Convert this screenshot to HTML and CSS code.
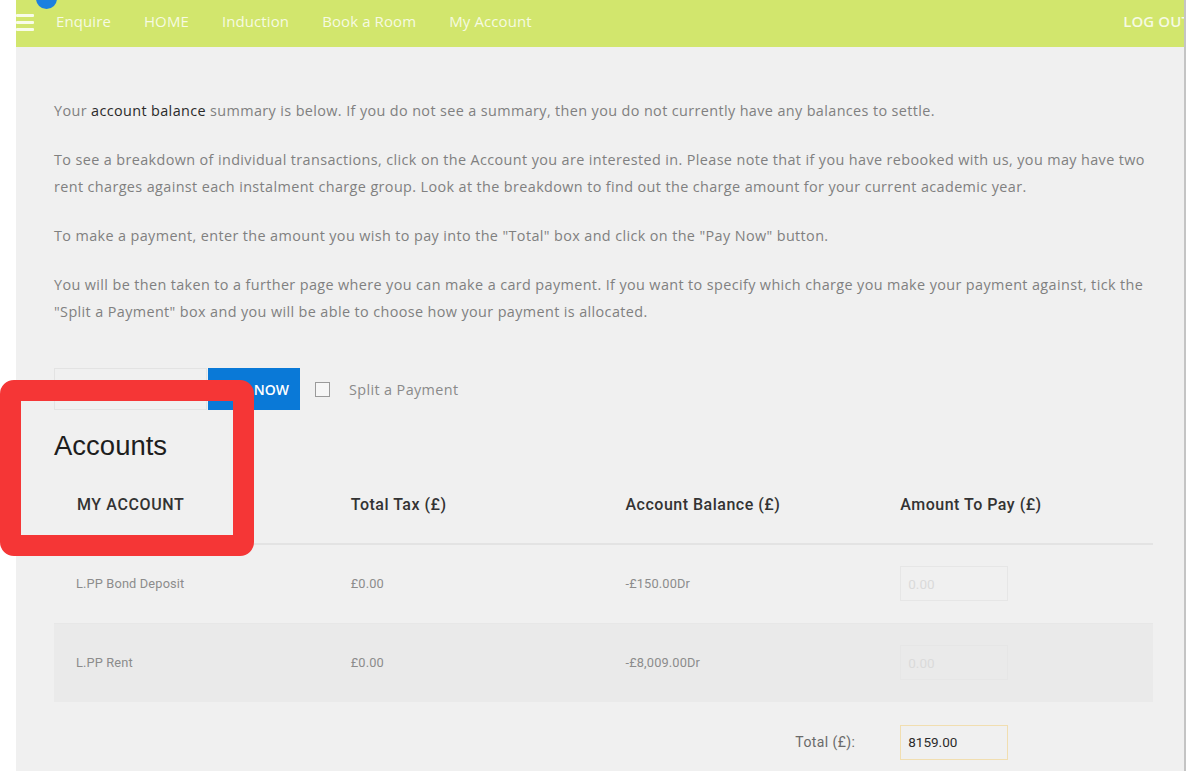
FILE: index.html
```html
<!DOCTYPE html>
<html lang="en">
<head>
<meta charset="utf-8">
<title>My Account</title>
<link rel="stylesheet" href="styles.css">
</head>
<body>
<div class="page">
  <nav class="nav">
    <span class="burger"><i></i><i></i><i></i></span>
    <a class="nav-link" href="#">Enquire</a>
    <a class="nav-link" href="#">HOME</a>
    <a class="nav-link" href="#">Induction</a>
    <a class="nav-link" href="#">Book a Room</a>
    <a class="nav-link" href="#">My Account</a>
    <a class="nav-link logout" href="#">LOG OUT</a>
  </nav>
  <span class="dot"></span>

  <main class="content">
    <p>Your <strong>account balance</strong> summary is below. If you do not see a summary, then you do not currently have any balances to settle.</p>
    <p>To see a breakdown of individual transactions, click on the Account you are interested in. Please note that if you have rebooked with us, you may have two rent charges against each instalment charge group. Look at the breakdown to find out the charge amount for your current academic year.</p>
    <p>To make a payment, enter the amount you wish to pay into the "Total" box and click on the "Pay Now" button.</p>
    <p>You will be then taken to a further page where you can make a card payment. If you want to specify which charge you make your payment against, tick the "Split a Payment" box and you will be able to choose how your payment is allocated.</p>

    <div class="pay-row">
      <input class="pay-input" type="text">
      <button class="pay-btn">PAY NOW</button>
      <label class="split"><span class="box"></span>Split a Payment</label>
    </div>

    <h2 class="heading">Accounts</h2>

    <table class="accounts">
      <thead>
        <tr>
          <th class="first">MY ACCOUNT</th>
          <th>Total Tax (£)</th>
          <th>Account Balance (£)</th>
          <th>Amount To Pay (£)</th>
        </tr>
      </thead>
      <tbody>
        <tr>
          <td>L.PP Bond Deposit</td>
          <td>£0.00</td>
          <td>-£150.00Dr</td>
          <td><input class="amt" type="text" placeholder="0.00"></td>
        </tr>
        <tr class="alt">
          <td>L.PP Rent</td>
          <td>£0.00</td>
          <td>-£8,009.00Dr</td>
          <td><input class="amt" type="text" placeholder="0.00"></td>
        </tr>
      </tbody>
      <tfoot>
        <tr>
          <td></td>
          <td></td>
          <td class="total-label">Total (£):</td>
          <td><input class="amt total" type="text" value="8159.00"></td>
        </tr>
      </tfoot>
    </table>
  </main>
</div>
<div class="annotation"></div>
</body>
</html>
```

FILE: styles.css
```css
* { box-sizing: border-box; }

html, body {
  margin: 0;
  padding: 0;
  background: #ffffff;
  height: 771px;
  overflow: hidden;
}

body {
  position: relative;
  font-family: "Open Sans", "Liberation Sans", sans-serif;
}

.page {
  position: relative;
  margin-left: 16px;
  width: 1170px;
  min-height: 771px;
  background: #f0f0f0;
  border-right: 2px solid #c4c4c4;
}

.nav {
  display: flex;
  align-items: center;
  height: 47px;
  padding-bottom: 5px;
  background: #d2e66d;
  overflow: hidden;
  white-space: nowrap;
}

.burger {
  display: flex;
  flex-direction: column;
  gap: 4px;
  width: 18px;
  margin-right: 22px;
  margin-top: 2px;
}

.burger i {
  display: block;
  height: 3px;
  background: rgba(255, 255, 255, 0.85);
  border-radius: 1px;
}

.nav-link {
  color: rgba(255, 255, 255, 0.82);
  text-decoration: none;
  font-size: 15px;
  margin-right: 33px;
  letter-spacing: 0.1px;
}

.logout {
  margin-left: auto;
  margin-right: -6px;
  font-weight: 600;
}

.dot {
  position: absolute;
  left: 20px;
  top: -12px;
  width: 21px;
  height: 21px;
  border-radius: 50%;
  background: #1b80df;
}

.content {
  padding: 50px 32px 0 38px;
}

.content p {
  margin: 0 0 22px;
  font-size: 14.4px;
  letter-spacing: 0.38px;
  line-height: 27px;
  color: #808080;
}

.content p strong {
  color: #2a2a2a;
  font-weight: 500;
}

.pay-row {
  display: flex;
  align-items: center;
  margin-top: 43px;
  height: 42px;
}

.pay-input {
  width: 153px;
  height: 42px;
  border: 1px solid #e3e3e3;
  background: #f0f0f0;
  margin: 0;
}

.pay-btn {
  width: 92px;
  height: 42px;
  border: 0;
  margin: 0 0 0 1px;
  background: #0a79d7;
  color: #ffffff;
  font-family: "Open Sans", "Liberation Sans", sans-serif;
  font-size: 14px;
  font-weight: 600;
  text-align: right;
  padding: 0 11px 0 0;
}

.split {
  display: flex;
  align-items: center;
  margin-left: 15px;
  font-size: 14.4px;
  letter-spacing: 0.38px;
  color: #8a8a8a;
}

.split .box {
  width: 15px;
  height: 15px;
  border: 1px solid #9a9a9a;
  background: #f6f6f6;
  margin-right: 19px;
}

.heading {
  margin: 20px 0 3px;
  font-family: "Liberation Sans", Arial, sans-serif;
  font-size: 27.5px;
  line-height: 32px;
  font-weight: 400;
  color: #1e1e1e;
}

.accounts {
  width: 1099px;
  border-collapse: collapse;
  table-layout: fixed;
}

.accounts th {
  height: 79px;
  text-align: left;
  padding: 0 0 0 22px;
  font-family: Roboto, "Liberation Sans", sans-serif;
  font-size: 16px;
  letter-spacing: 0.5px;
  font-weight: 500;
  color: #333333;
  border-bottom: 2px solid #e3e3e3;
}

.accounts th.first {
  padding-left: 23px;
  letter-spacing: 0.6px;
}

.accounts tbody td {
  height: 79px;
  padding: 0 0 0 22px;
  font-family: Roboto, "Liberation Sans", sans-serif;
  font-size: 12.8px;
  letter-spacing: 0.15px;
  color: #8c8c8c;
  border-bottom: 1px solid #e7e7e7;
}

.accounts tbody tr.alt td {
  background: #eaeaea;
  border-bottom: 0;
}

.accounts tfoot td {
  height: 80px;
  padding: 0 0 0 22px;
  font-family: Roboto, "Liberation Sans", sans-serif;
}

.accounts tfoot td.total-label {
  text-align: right;
  padding: 0 23px 0 0;
  font-size: 14px;
  letter-spacing: 0.4px;
  color: #6a6a6a;
}

.amt {
  width: 108px;
  height: 35px;
  border: 1px solid #e6e6e6;
  background: #f0f0f0;
  padding: 0 7px;
  font-family: Roboto, "Liberation Sans", sans-serif;
  font-size: 13.5px;
  color: #333333;
}

.amt::placeholder {
  color: #dadada;
}

.alt .amt {
  background: #eaeaea;
}

.amt.total {
  border-color: #f1deb0;
  color: #2b2b2b;
}

.annotation {
  position: absolute;
  left: 0;
  top: 380px;
  width: 254px;
  height: 176px;
  border: 21px solid #f53636;
  border-radius: 14px;
}
```
